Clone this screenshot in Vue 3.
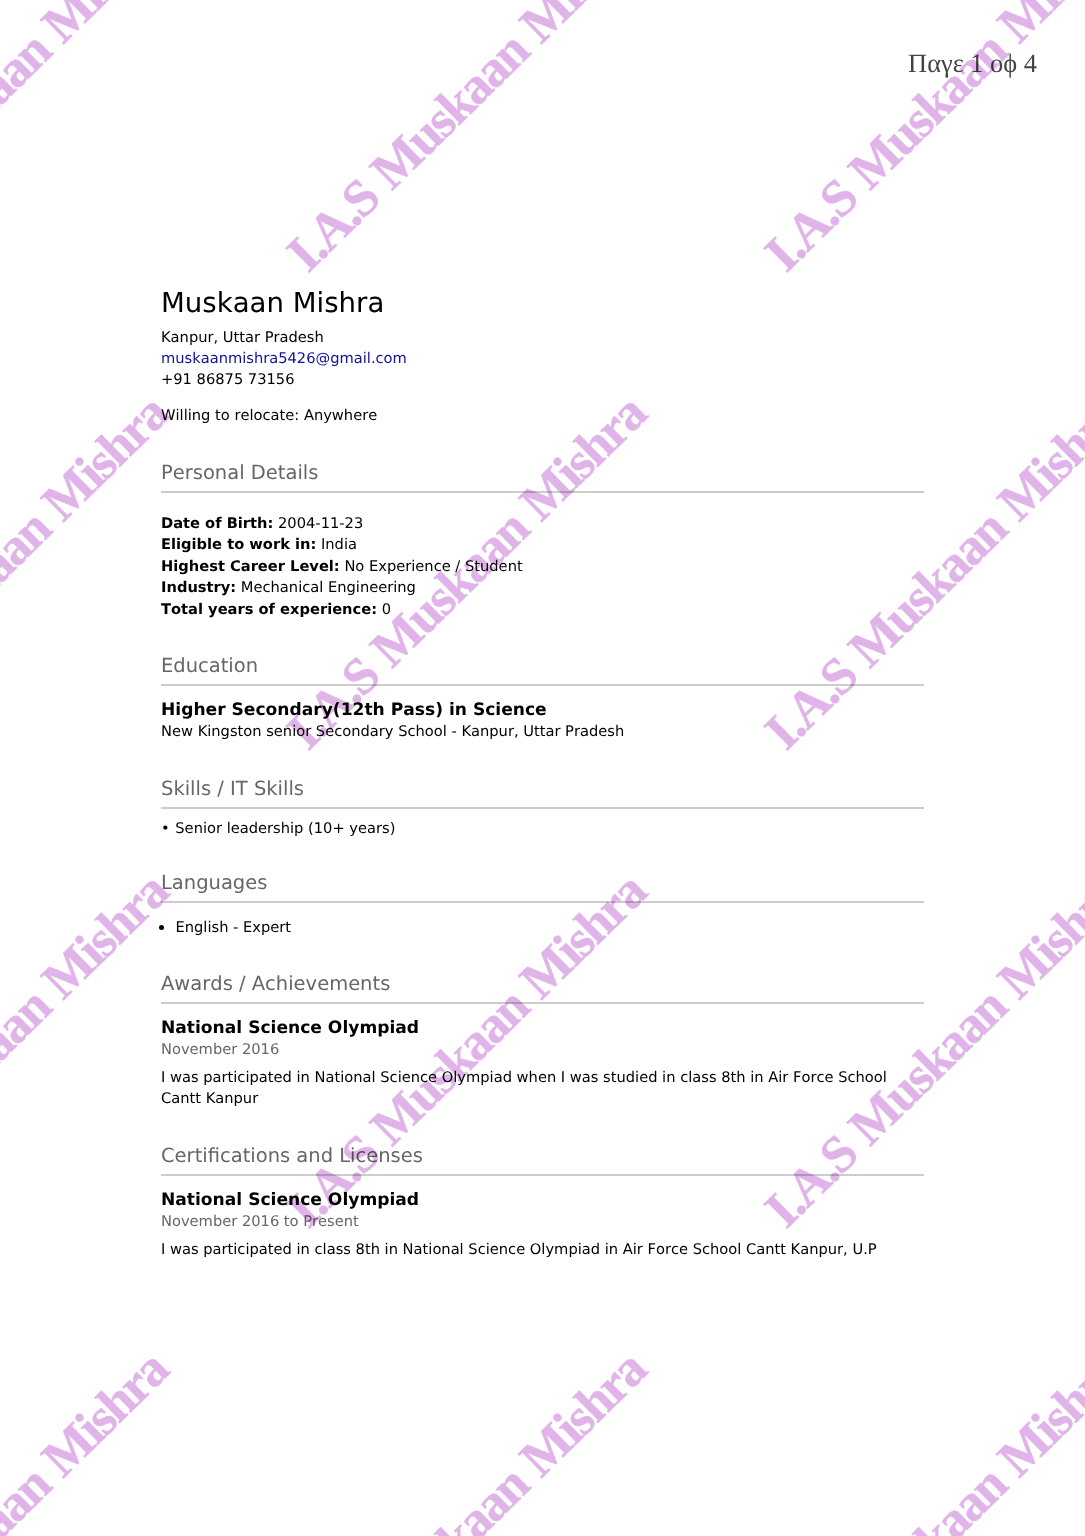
<template>
  <div class="page">
    <div class="page-number">Παγε 1 οϕ 4</div>

    <main class="resume">
      <h1 class="name">Muskaan Mishra</h1>
      <p class="line">Kanpur, Uttar Pradesh</p>
      <p class="line email">muskaanmishra5426@gmail.com</p>
      <p class="line">+91 86875 73156</p>
      <p class="line relocate">Willing to relocate: Anywhere</p>

      <section class="section section--personal">
        <h2 class="section__title">Personal Details</h2>
        <p v-for="row in details" :key="row.label" class="line line--detail">
          <b>{{ row.label }}:</b> {{ row.value }}
        </p>
      </section>

      <section class="section section--education">
        <h2 class="section__title">Education</h2>
        <h3 class="entry-title">Higher Secondary(12th Pass) in Science</h3>
        <p class="line">New Kingston senior Secondary School - Kanpur, Uttar Pradesh</p>
      </section>

      <section class="section section--skills">
        <h2 class="section__title">Skills / IT Skills</h2>
        <p class="line"><span class="bullet">•</span> Senior leadership (10+ years)</p>
      </section>

      <section class="section section--languages">
        <h2 class="section__title">Languages</h2>
        <ul class="list">
          <li class="line">English - Expert</li>
        </ul>
      </section>

      <section class="section section--awards">
        <h2 class="section__title">Awards / Achievements</h2>
        <h3 class="entry-title">National Science Olympiad</h3>
        <p class="line muted">November 2016</p>
        <p class="line description">I was participated in National Science Olympiad when I was studied in class 8th in Air Force School Cantt Kanpur</p>
      </section>

      <section class="section section--certs">
        <h2 class="section__title">Certifications and Licenses</h2>
        <h3 class="entry-title">National Science Olympiad</h3>
        <p class="line muted">November 2016 to Present</p>
        <p class="line description">I was participated in class 8th in National Science Olympiad in Air Force School Cantt Kanpur, U.P</p>
      </section>
    </main>

    <div class="watermarks" aria-hidden="true">
      <span
        v-for="mark in marks"
        :key="mark.id"
        class="watermark"
        :style="{ left: mark.x + 'px', top: mark.y + 'px' }"
      >I.A.S Muskaan Mishra</span>
    </div>
  </div>
</template>

<script setup>
const details = [
  { label: 'Date of Birth', value: '2004-11-23' },
  { label: 'Eligible to work in', value: 'India' },
  { label: 'Highest Career Level', value: 'No Experience / Student' },
  { label: 'Industry', value: 'Mechanical Engineering' },
  { label: 'Total years of experience', value: '0' },
]

// watermark tile repeats every 478px in both directions
const marks = []
for (let row = 0; row < 4; row++) {
  for (let col = 0; col < 3; col++) {
    marks.push({ id: `${row}-${col}`, x: -163 + col * 478, y: 281 + row * 478 })
  }
}
</script>

<style scoped>
.page {
  position: relative;
  width: 1085px;
  height: 1536px;
  overflow: hidden;
  background: #fff;
  font-family: "DejaVu Sans", sans-serif;
  color: #000;
  text-rendering: geometricPrecision;
  font-kerning: none;
}

.page-number {
  padding: 47px 48px 0 0;
  height: 283px;
  box-sizing: border-box;
  text-align: right;
  font-family: "Liberation Serif", serif;
  font-size: 26.4px;
  line-height: 32px;
  color: #444;
}

.resume {
  width: 763px;
  margin-left: 161px;
}

.name {
  margin: 0 0 4px;
  font-size: 27.6px;
  font-weight: 400;
  line-height: 40px;
}

.line {
  margin: 0;
  font-size: 14.67px;
  line-height: 21px;
}

.line--detail {
  line-height: 21.4px;
}

.email {
  color: #12129b;
}

.relocate {
  margin-top: 15px;
}

.muted {
  color: #666;
}

.description {
  margin-top: 7px;
}

.bullet {
  margin-right: 1px;
}

.section__title {
  margin: 0;
  padding-bottom: 5px;
  border-bottom: 2px solid #ccc;
  font-size: 19.5px;
  font-weight: 400;
  line-height: 26px;
  color: #666;
}

.section--personal { margin-top: 34px; }
.section--personal .section__title { margin-bottom: 20px; }
.section--education { margin-top: 33px; }
.section--skills { margin-top: 34px; }
.section--languages { margin-top: 31px; }
.section--awards { margin-top: 33px; }
.section--certs { margin-top: 34px; }

.section--education .section__title,
.section--awards .section__title,
.section--certs .section__title {
  margin-bottom: 13px;
}

.section--skills .section__title {
  margin-bottom: 9px;
}

.section--languages .section__title {
  margin-bottom: 13px;
}

.entry-title {
  margin: 0;
  font-size: 17.1px;
  font-weight: 700;
  line-height: 22px;
}

.list {
  margin: 0;
  padding-left: 14.5px;
}

.list li::marker {
  font-size: 18px;
}

.watermarks {
  position: absolute;
  inset: 0;
  pointer-events: none;
  mix-blend-mode: multiply;
}

.watermark {
  position: absolute;
  transform-origin: 0 100%;
  transform: translateY(-100%) rotate(-44.5deg);
  font-family: "Liberation Serif", serif;
  font-size: 52px;
  font-weight: 700;
  letter-spacing: -1.8px;
  word-spacing: 2.5px;
  line-height: 1;
  white-space: nowrap;
  color: #e1b4e9;
  -webkit-text-stroke: 0.5px #e1b4e9;
}
</style>
